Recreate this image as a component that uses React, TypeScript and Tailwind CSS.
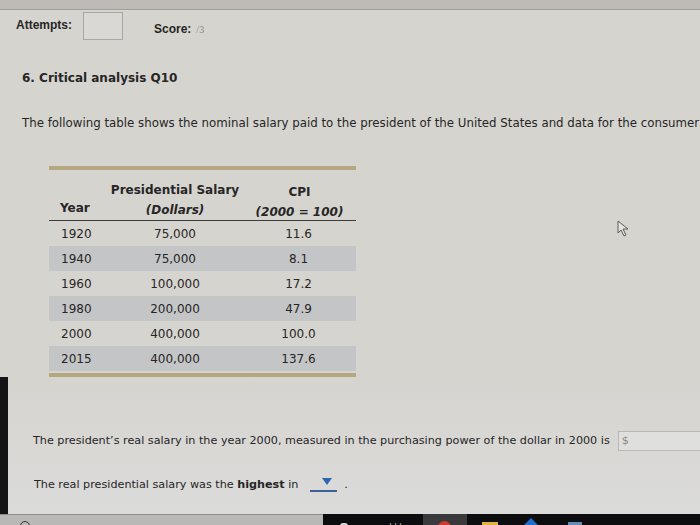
const ROWS = [
  { year: '1920', salary: '75,000', cpi: '11.6' },
  { year: '1940', salary: '75,000', cpi: '8.1' },
  { year: '1960', salary: '100,000', cpi: '17.2' },
  { year: '1980', salary: '200,000', cpi: '47.9' },
  { year: '2000', salary: '400,000', cpi: '100.0' },
  { year: '2015', salary: '400,000', cpi: '137.6' },
]

const sans = "font-['DejaVu_Sans',Verdana,sans-serif]"

function Cursor() {
  return (
    <svg className="absolute left-[617px] top-[220px]" width="14" height="18" viewBox="0 0 14 18">
      <path d="M1 1 L1 13 L4 10 L7 16 L9 15 L6 9 L11 9 Z" fill="#e4e3df" stroke="#5a5a5a" strokeWidth="1" strokeLinejoin="round" />
    </svg>
  )
}

export default function App() {
  return (
    <div className="relative w-[700px] h-[525px] overflow-hidden bg-[#d6d4cf] text-[#262626]">
      {/* top edge of the window */}
      <div className="h-[10px] bg-[#bebbb6] border-b border-[#a3a09b]" />

      {/* attempts / score */}
      <div className="flex items-center h-[32px] font-['Liberation_Sans',Arial,sans-serif] text-[12px] font-bold">
        <span className="ml-[16px] -mt-[2px]">Attempts:</span>
        <div className="ml-[11px] w-[40px] h-[28px] border border-[#a9a7a3] bg-[#d9d8d4]" />
        <span className="ml-[31px] mt-[6px]">Score:</span>
        <span className="ml-[5px] mt-[6px] font-normal text-[10px] text-[#8a8885] font-['Liberation_Serif',serif]">/3</span>
      </div>

      <div className={`${sans} pl-[22px]`}>
        <h2 className="mt-[28px] text-[12px] font-bold leading-[16px]">6. Critical analysis Q10</h2>
        <p className="mt-[29px] text-[11.8px] leading-[16px] whitespace-nowrap">
          The following table shows the nominal salary paid to the president of the United States and data for the consumer price index (CPI).
        </p>
      </div>

      {/* table */}
      <div className={`${sans} ml-[49px] mt-[35px] w-[307px] text-[12px]`}>
        <div className="h-[4px] bg-[#b3a87f]" />
        <div className="grid grid-cols-[70px_112px_1fr] h-[51px] border-b border-[#3c3c3c] font-bold leading-[20px] pt-[10px]">
          <div className="pl-[11px] pt-[18px]">Year</div>
          <div className="text-center whitespace-nowrap -mx-[10px]">
            <div>Presidential Salary</div>
            <div className="italic">(Dollars)</div>
          </div>
          <div className="text-center pl-[12px] pt-[2px] whitespace-nowrap">
            <div>CPI</div>
            <div className="italic">(2000 = 100)</div>
          </div>
        </div>
        {ROWS.map((r, i) => (
          <div
            key={r.year}
            className={`grid grid-cols-[70px_112px_1fr] h-[25px] items-center ${i % 2 === 1 ? 'bg-[#c4c5c6]' : ''}`}
          >
            <div className="pl-[12px]">{r.year}</div>
            <div className="text-center">{r.salary}</div>
            <div className="text-center pl-[10px]">{r.cpi}</div>
          </div>
        ))}
        <div className="mt-[2px] h-[4px] bg-[#b3a87f]" />
      </div>

      {/* questions */}
      <div className={`${sans} h-[137px] pt-[54px] border-l-[8px] border-[#141414] bg-linear-to-b from-[#d6d4cf] to-[#dbdbda] text-[11.2px]`}>
        <div className="flex items-center h-[20px] pl-[25px]">
          <span className="whitespace-nowrap">
            The president’s real salary in the year 2000, measured in the purchasing power of the dollar in 2000 is
          </span>
          <div className="ml-[8px] flex items-center h-[20px] w-[120px] shrink-0 border border-[#b8b8b8] bg-[#dfdfdd] pl-[3px] text-[#8c8c8c]">$</div>
        </div>
        <div className="flex items-center h-[20px] mt-[24px] pl-[26px]">
          <span>
            The real presidential salary was the <b>highest</b> in
          </span>
          <div className="ml-[12px] w-[27px] h-[14px] border-b-2 border-[#3d5f9a] flex items-start justify-end pr-[5px]">
            <svg width="10" height="7" viewBox="0 0 10 7">
              <path d="M0 0 L10 0 L5 7 Z" fill="#2f66b3" />
            </svg>
          </div>
          <span className="ml-[7px]">.</span>
        </div>
      </div>

      {/* taskbar */}
      <div className="flex h-[13px]">
        <div className="w-[323px] bg-[#b9b8b6] border-t border-[#8e8d8a] pl-[20px] pt-[6px]">
          <div className="w-[10px] h-[10px] rounded-full border border-[#333]" />
        </div>
        <div className="flex-1 bg-[#0d0d0f] flex items-start">
          <div className="ml-[17px] mt-[9px] w-[8px] h-[6px] rounded-full bg-[#d8d8d8]" />
          <div className="ml-[40px] mt-[8px] text-[#cfcfcf] text-[9px] leading-[9px]">|||</div>
          <div className="ml-[20px] w-[44px] h-[13px] bg-[#3a3a3c] flex justify-center pt-[7px]">
            <div className="w-[13px] h-[13px] rounded-full bg-[#d23a2f]" />
          </div>
          <div className="ml-[15px] mt-[8px] w-[16px] h-[8px] bg-[#e0b33a]" />
          <div className="ml-[26px] mt-[7px] w-[14px] h-[14px] rotate-45 bg-[#1e6fd0]" />
          <div className="ml-[30px] mt-[8px] w-[14px] h-[8px] bg-[#5e8fb8]" />
        </div>
      </div>

      <Cursor />
    </div>
  )
}
